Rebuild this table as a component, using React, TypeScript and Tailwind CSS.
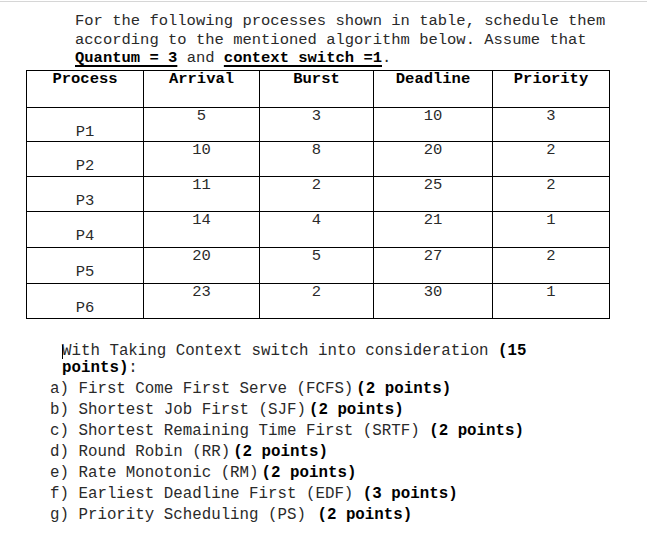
import React from "react";

const rows = [
  { p: "P1", a: "5", b: "3", d: "10", pr: "3", h: "h-[34px]" },
  { p: "P2", a: "10", b: "8", d: "20", pr: "2", h: "h-[35px]" },
  { p: "P3", a: "11", b: "2", d: "25", pr: "2", h: "h-[35px]" },
  { p: "P4", a: "14", b: "4", d: "21", pr: "1", h: "h-[36px]" },
  { p: "P5", a: "20", b: "5", d: "27", pr: "2", h: "h-[36px]" },
  { p: "P6", a: "23", b: "2", d: "30", pr: "1", h: "h-[35px]" },
];

const cols = "grid grid-cols-[117px_116px_114px_119px_117px]";

export default function App() {
  return (
    <div className="w-[647px] h-[546px] bg-white text-[15.5px] text-[#2a2a2a] font-['Liberation_Mono','Courier_New',monospace] overflow-hidden">
      <div className="h-px bg-[#d6d6d6] mt-px" />
      <div className="pl-[75px] pt-[10px] leading-[18.5px]">
        <p>For the following processes shown in table, schedule them</p>
        <p>according to the mentioned algorithm below. Assume that</p>
        <p>
          <b className="text-black underline decoration-2 underline-offset-[3px]">Quantum = 3</b> and{" "}
          <b className="text-black underline decoration-2 underline-offset-[3px]">context switch =1</b>.
        </p>
      </div>

      <div className="ml-[26px] mt-[2px] w-[584px] border-t border-l border-black">
        <div className={`${cols} h-[37px] border-b border-black`}>
          {["Process", "Arrival", "Burst", "Deadline", "Priority"].map((t) => (
            <div key={t} className="border-r border-black text-center font-bold text-black leading-[16px]">
              {t}
            </div>
          ))}
        </div>
        {rows.map((r) => (
          <div key={r.p} className={`${cols} ${r.h} border-b border-black`}>
            <div className="border-r border-black text-center leading-[14px] pt-[17px]">{r.p}</div>
            <div className="border-r border-black text-center leading-[14px] pt-px">{r.a}</div>
            <div className="border-r border-black text-center leading-[14px] pt-px">{r.b}</div>
            <div className="border-r border-black text-center leading-[14px] pt-px">{r.d}</div>
            <div className="border-r border-black text-center leading-[14px] pt-px">{r.pr}</div>
          </div>
        ))}
      </div>

      <div className="text-[15.8px]">
        <div className="pl-[62px] mt-[24px] leading-[17px] relative">
          <span className="absolute left-[62px] top-[2px] h-[14px] border-l border-black" />
          <p>
            With Taking Context switch into consideration <b className="text-black">(15</b>
          </p>
          <p>
            <b className="text-black">points)</b>:
          </p>
        </div>

        <div className="pl-[50px] mt-[2px] leading-[21px]">
          <p>
            a) First Come First Serve (FCFS)<b className="text-black ml-[3px]">(2 points)</b>
          </p>
          <p>
            b) Shortest Job First (SJF)<b className="text-black ml-[3px]">(2 points)</b>
          </p>
          <p>
            c) Shortest Remaining Time First (SRTF) <b className="text-black">(2 points)</b>
          </p>
          <p>
            d) Round Robin (RR)<b className="text-black ml-[3px]">(2 points)</b>
          </p>
          <p>
            e) Rate Monotonic (RM)<b className="text-black ml-[3px]">(2 points)</b>
          </p>
          <p>
            f) Earliest Deadline First (EDF) <b className="text-black">(3 points)</b>
          </p>
          <p>
            g) Priority Scheduling (PS) <b className="text-black ml-[2px]">(2 points)</b>
          </p>
        </div>
      </div>
    </div>
  );
}
